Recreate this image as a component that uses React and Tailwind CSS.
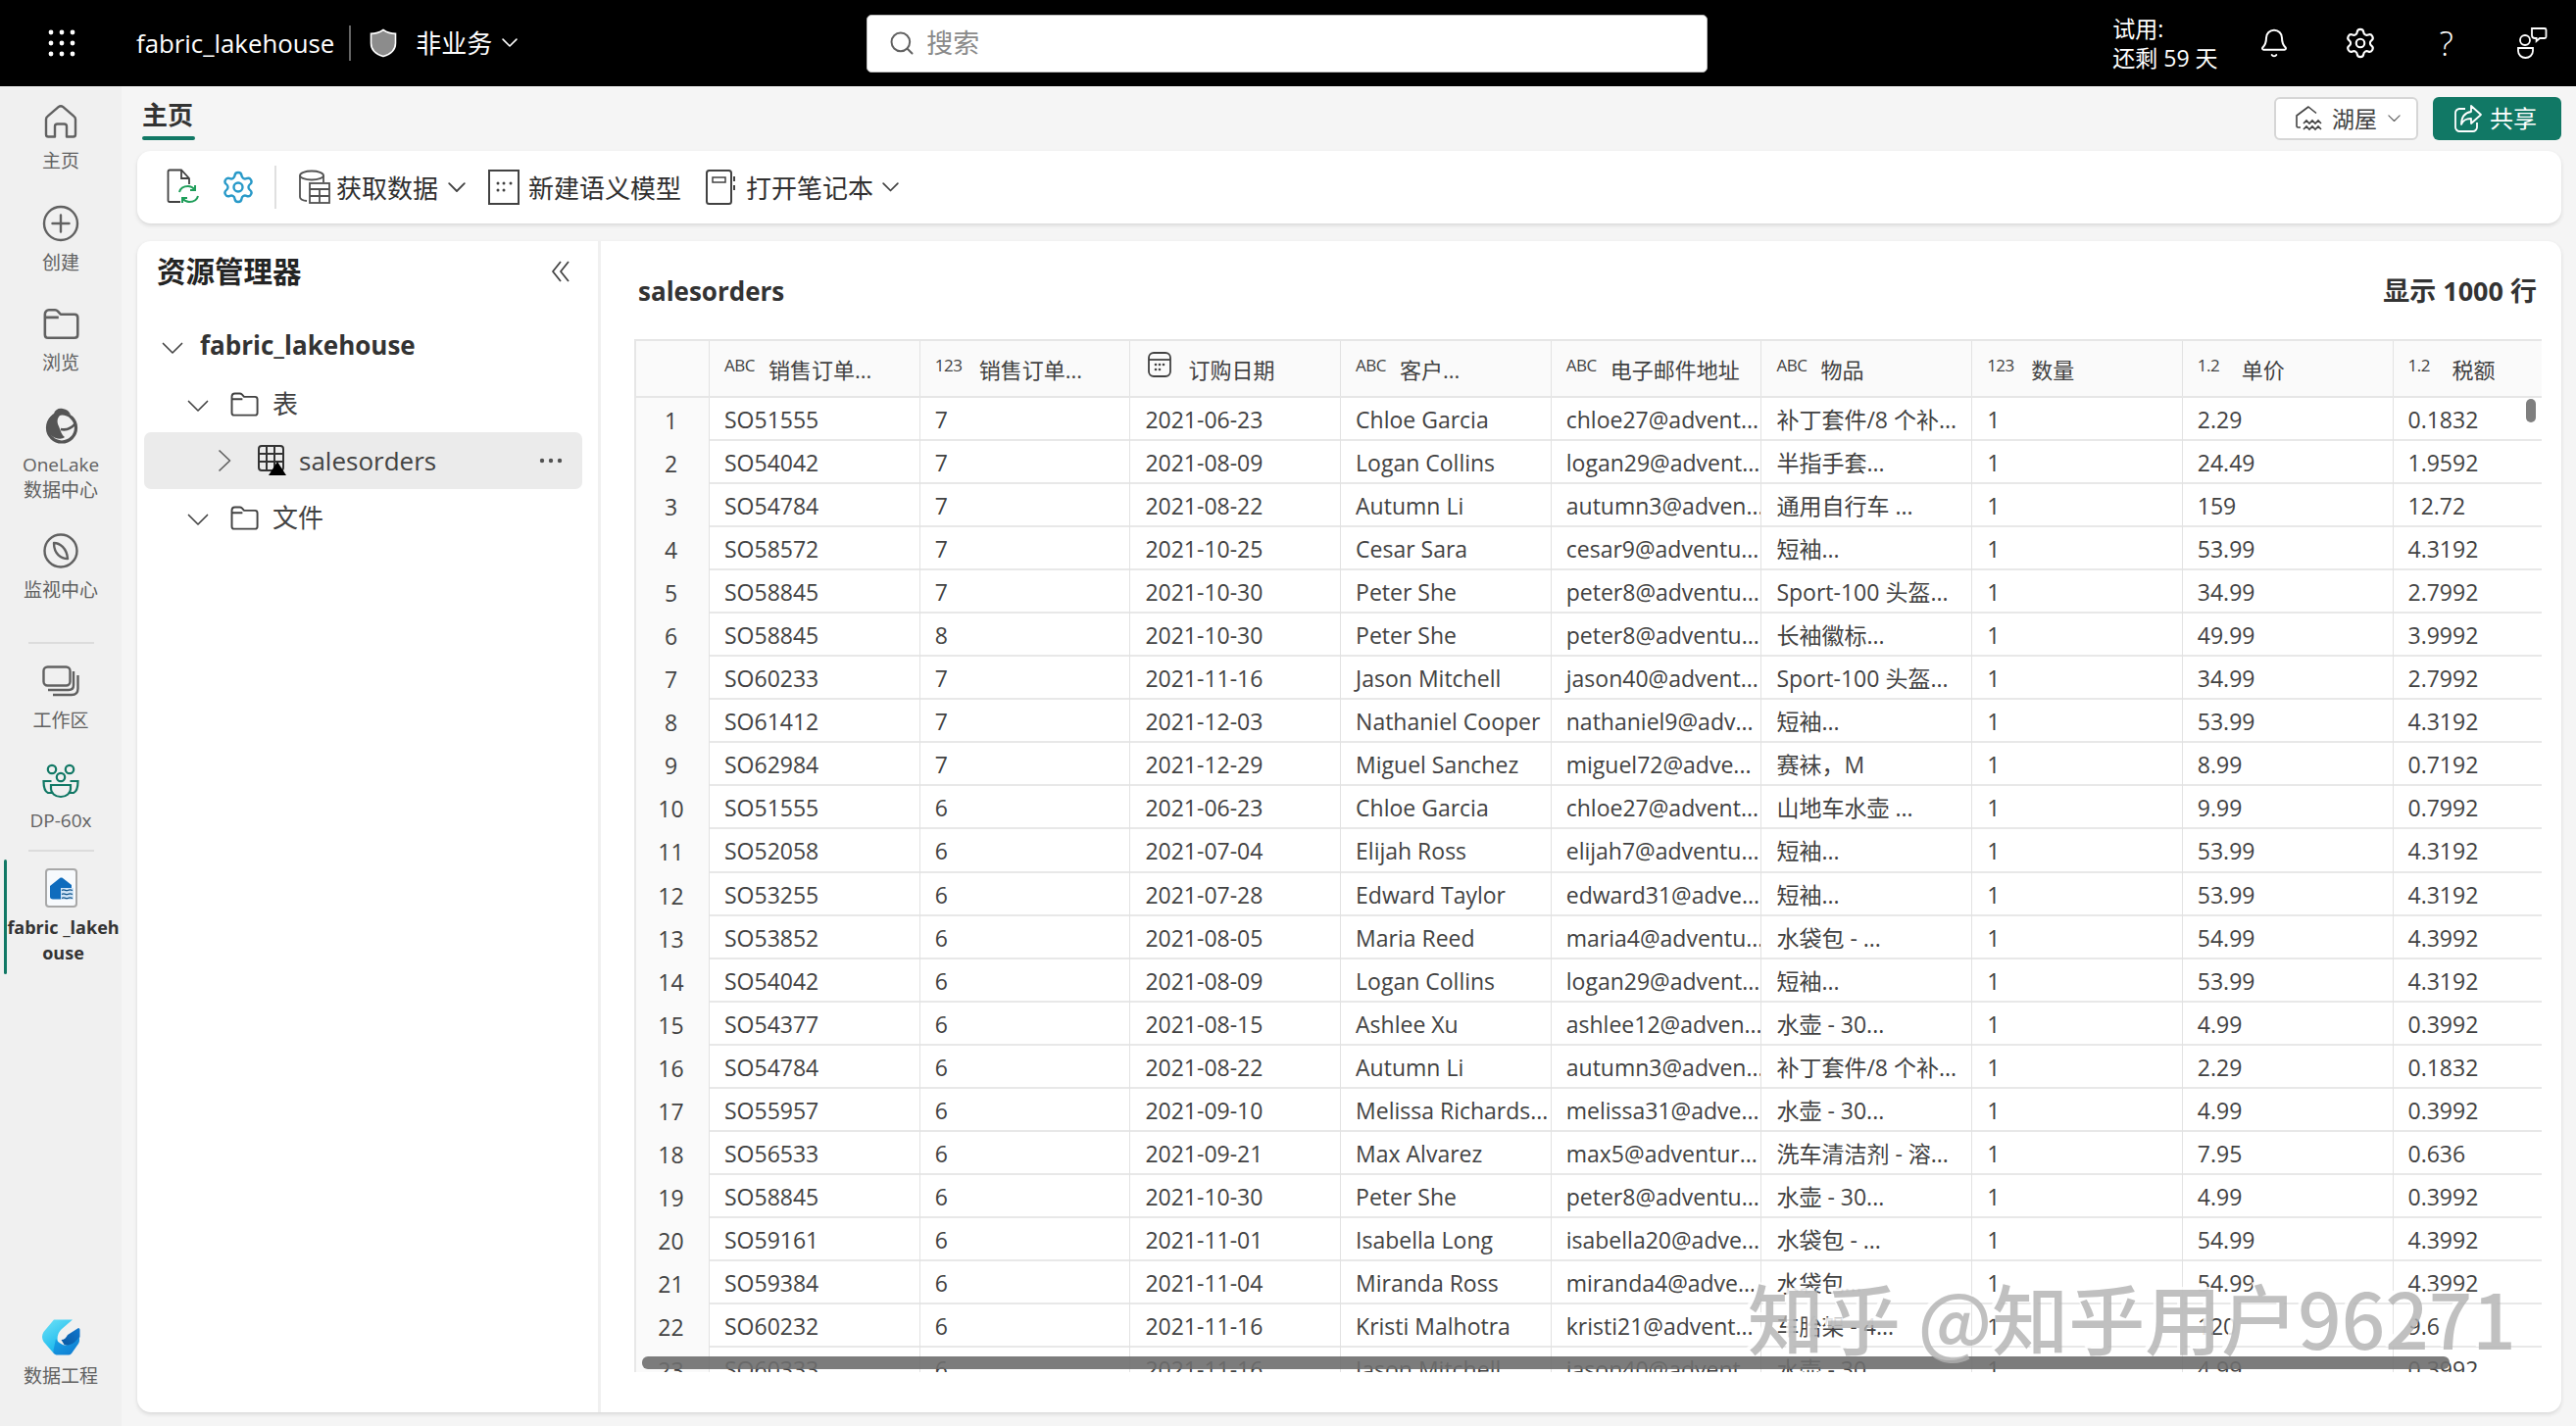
import React from "react";
import { Bell, Settings, Search } from "lucide-react";

const rows = [
["SO51555","7","2021-06-23","Chloe Garcia","chloe27@advent...","补丁套件/8 个补...","1","2.29","0.1832"],
["SO54042","7","2021-08-09","Logan Collins","logan29@advent...","半指手套...","1","24.49","1.9592"],
["SO54784","7","2021-08-22","Autumn Li","autumn3@adven...","通用自行车 ...","1","159","12.72"],
["SO58572","7","2021-10-25","Cesar Sara","cesar9@adventu...","短袖...","1","53.99","4.3192"],
["SO58845","7","2021-10-30","Peter She","peter8@adventu...","Sport-100 头盔...","1","34.99","2.7992"],
["SO58845","8","2021-10-30","Peter She","peter8@adventu...","长袖徽标...","1","49.99","3.9992"],
["SO60233","7","2021-11-16","Jason Mitchell","jason40@advent...","Sport-100 头盔...","1","34.99","2.7992"],
["SO61412","7","2021-12-03","Nathaniel Cooper","nathaniel9@adv...","短袖...","1","53.99","4.3192"],
["SO62984","7","2021-12-29","Miguel Sanchez","miguel72@adve...","赛袜，M","1","8.99","0.7192"],
["SO51555","6","2021-06-23","Chloe Garcia","chloe27@advent...","山地车水壶 ...","1","9.99","0.7992"],
["SO52058","6","2021-07-04","Elijah Ross","elijah7@adventu...","短袖...","1","53.99","4.3192"],
["SO53255","6","2021-07-28","Edward Taylor","edward31@adve...","短袖...","1","53.99","4.3192"],
["SO53852","6","2021-08-05","Maria Reed","maria4@adventu...","水袋包 - ...","1","54.99","4.3992"],
["SO54042","6","2021-08-09","Logan Collins","logan29@advent...","短袖...","1","53.99","4.3192"],
["SO54377","6","2021-08-15","Ashlee Xu","ashlee12@adven...","水壶 - 30...","1","4.99","0.3992"],
["SO54784","6","2021-08-22","Autumn Li","autumn3@adven...","补丁套件/8 个补...","1","2.29","0.1832"],
["SO55957","6","2021-09-10","Melissa Richards...","melissa31@adve...","水壶 - 30...","1","4.99","0.3992"],
["SO56533","6","2021-09-21","Max Alvarez","max5@adventur...","洗车清洁剂 - 溶...","1","7.95","0.636"],
["SO58845","6","2021-10-30","Peter She","peter8@adventu...","水壶 - 30...","1","4.99","0.3992"],
["SO59161","6","2021-11-01","Isabella Long","isabella20@adve...","水袋包 - ...","1","54.99","4.3992"],
["SO59384","6","2021-11-04","Miranda Ross","miranda4@adve...","水袋包...","1","54.99","4.3992"],
["SO60232","6","2021-11-16","Kristi Malhotra","kristi21@advent...","车胎架 - 4...","1","120","9.6"],
["SO60333","6","2021-11-16","Jason Mitchell","jason40@advent...","水壶 - 30...","1","4.99","0.3992"],
];

const cols = [
  ["ABC","销售订单..."],["123","销售订单..."],["DATE","订购日期"],["ABC","客户..."],["ABC","电子邮件地址"],["ABC","物品"],["123","数量"],["1.2","单价"],["1.2","税额"],
];

const gridCols = "grid grid-cols-[75px_repeat(8,214.7px)_153px]";

function Chevron({ className = "", w = 15, color = "currentColor", sw = 1.6 }) {
  return (
    <svg width={w} height={w * 0.6} viewBox="0 0 15 9" fill="none" className={className}>
      <path d="M1 1l6.5 6.5L14 1" stroke={color} strokeWidth={sw} strokeLinecap="round" strokeLinejoin="round" />
    </svg>
  );
}

function FolderIcon({ w = 30, h = 26, sw = 2, color = "#424242" }) {
  return (
    <svg width={w} height={h} viewBox="0 0 30 26" fill="none">
      <path d="M1.5 5c0-2 1.3-3.5 3.3-3.5h5c1 0 1.8.4 2.4 1l2.3 2.6H26c1.5 0 2.6 1.1 2.6 2.6V22c0 1.5-1.1 2.6-2.6 2.6H4C2.6 24.6 1.5 23.5 1.5 22V5zM1.5 7.6h11.3" stroke={color} strokeWidth={sw} strokeLinejoin="round" />
    </svg>
  );
}

function RailItem({ icon, lines, className = "", labelClass = "text-[#616161]" }) {
  return (
    <div className={`flex flex-col items-center w-full ${className}`}>
      <div className="h-[40px] flex items-center justify-center">{icon}</div>
      <div className="mt-[7px] flex flex-col items-center">
        {lines.map((l) => (
          <div key={l} className={`text-[19px] leading-[26px] whitespace-nowrap ${labelClass}`}>{l}</div>
        ))}
      </div>
    </div>
  );
}

function TopBar() {
  const dots = [];
  for (let y = 0; y < 3; y++) for (let x = 0; x < 3; x++) dots.push(<circle key={x + "-" + y} cx={3 + x * 11} cy={3 + y * 11} r="2.4" fill="#fff" />);
  return (
    <div className="h-[88px] bg-black flex items-center text-white shrink-0 relative">
      <svg width="28" height="28" viewBox="0 0 28 28" className="ml-[49px]">{dots}</svg>
      <div className="ml-[62px] text-[25.8px] leading-[36px] whitespace-nowrap">fabric_lakehouse</div>
      <div className="ml-[15px] w-[2px] h-[36px] bg-[#666]" />
      <svg width="28" height="30" viewBox="0 0 28 30" className="ml-[19px]">
        <path d="M14 1.5C10.5 4 6 5.4 1.5 5.4V15c0 7 5.2 11.4 12.5 13.6C21.3 26.4 26.5 22 26.5 15V5.4C22 5.4 17.5 4 14 1.5z" fill="#8c8c8c" stroke="#fff" strokeWidth="1.6" />
      </svg>
      <div className="ml-[19px] text-[26px] leading-[36px] whitespace-nowrap">非业务</div>
      <Chevron className="ml-[10px]" w={16} color="#fff" sw={1.5} />
      <div className="ml-[356px] w-[858px] h-[59px] bg-white rounded-[5px] border border-[#bdbdbd] flex items-center pl-[21px]">
        <Search size={28} strokeWidth={1.7} className="text-[#616161]" />
        <span className="ml-[11px] text-[27px] text-[#8a8a8a]">搜索</span>
      </div>
      <div className="ml-[413px] flex flex-col text-[23px] leading-[30px] whitespace-nowrap">
        <span>试用:</span>
        <span>还剩 59 天</span>
      </div>
      <Bell size={32} strokeWidth={1.5} className="ml-[41px]" />
      <Settings size={34} strokeWidth={1.5} className="ml-[55px]" />
      <div className="ml-[61px] w-[20px] text-[34px] leading-[40px] font-light text-center">?</div>
      <svg width="32" height="36" viewBox="0 0 32 36" fill="none" stroke="#fff" strokeWidth="1.8" className="ml-[61px] shrink-0">
        <circle cx="9" cy="15" r="5" />
        <path d="M2 23h15v3c0 4-3.4 7-7.5 7S2 30 2 26v-3z" />
        <path d="M16 3h13c1 0 1.5.6 1.5 1.5v7c0 1-.6 1.5-1.5 1.5h-5l-3.4 3v-3H19c-1.5 0-3-1-3-3V3z" />
      </svg>
    </div>
  );
}

function Rail() {
  const grey = "#616161";
  return (
    <div className="w-[124px] shrink-0 bg-[#f0f0f0] flex flex-col items-center pt-[16px] pb-[38px]">
      <RailItem
        lines={["主页"]}
        icon={
          <svg width="36" height="36" viewBox="0 0 36 36" fill="none" stroke={grey} strokeWidth="2.4" strokeLinejoin="round">
            <path d="M15.6 3.2c1.4-1.2 3.4-1.2 4.8 0l11 9.4c1 .8 1.6 2 1.6 3.2v15.4c0 1.3-1 2.3-2.3 2.3H24V23c0-1.5-1-2.5-2.5-2.5h-7C13 20.5 12 21.5 12 23v10.5H5.3C4 33.5 3 32.5 3 31.2V15.8c0-1.2.6-2.4 1.6-3.2z" />
          </svg>
        }
      />
      <RailItem
        className="mt-[31px]"
        lines={["创建"]}
        icon={
          <svg width="38" height="38" viewBox="0 0 38 38" fill="none" stroke={grey} strokeWidth="2.4" strokeLinecap="round">
            <circle cx="19" cy="19" r="17" />
            <path d="M19 10.5v17M10.5 19h17" />
          </svg>
        }
      />
      <RailItem className="mt-[29px]" lines={["浏览"]} icon={<FolderIcon w={37} h={33} sw={2.1} color={grey} />} />
      <RailItem
        className="mt-[31px]"
        lines={["OneLake", "数据中心"]}
        icon={
          <svg width="38" height="38" viewBox="0 0 38 38" fill="none">
            <circle cx="20" cy="21.5" r="14.5" stroke="#555" strokeWidth="3.2" />
            <path d="M5 20C5 13 9 9 12 7c1-4 5-6 9-5 4 .6 7 3 8 6-4-1-8-1-11 1-3 3-3 7-1 11 2 5 3 9 6 11-2 2-6 2-9 1C9 30 5 26 5 20z" fill="#555" />
            <path d="M19 23c5 1 11-1 15-6" stroke="#555" strokeWidth="2.6" />
          </svg>
        }
      />
      <RailItem
        className="mt-[29px]"
        lines={["监视中心"]}
        icon={
          <svg width="38" height="38" viewBox="0 0 38 38" fill="none" stroke={grey} strokeWidth="2.4">
            <circle cx="19" cy="19" r="16.5" />
            <path d="M12 11c6 0 13 5 14 16-6.5 0-14-4.5-14-16z" strokeLinejoin="round" />
          </svg>
        }
      />
      <div className="mt-[40px] w-[67px] h-[2px] bg-[#dcdcdc]" />
      <RailItem
        className="mt-[18px]"
        lines={["工作区"]}
        icon={
          <svg width="38" height="32" viewBox="0 0 38 32" fill="none" stroke={grey} strokeWidth="2.4">
            <rect x="1.5" y="1.5" width="27" height="19" rx="4" />
            <path d="M6 25h21c3 0 5-2 5-5V6" />
            <path d="M11 30h19c4 0 6.5-2.5 6.5-6.5V10" />
          </svg>
        }
      />
      <RailItem
        className="mt-[29px]"
        lines={["DP-60x"]}
        icon={
          <svg width="38" height="36" viewBox="0 0 38 36" fill="none" stroke="#117865" strokeWidth="2.2">
            <circle cx="10" cy="6" r="4.2" />
            <circle cx="28" cy="6" r="4.2" />
            <circle cx="19" cy="14" r="4.2" />
            <path d="M10 30H6c-2.5-1-4.5-5-4.5-12h8" />
            <path d="M28 30h4c2.5-1 4.5-5 4.5-12h-8" />
            <path d="M9 22h20v4c0 4-4 8-10 8S9 30 9 26z" />
          </svg>
        }
      />
      <div className="mt-[17px] w-[67px] h-[2px] bg-[#dcdcdc]" />
      <div className="relative mt-[17px] w-full flex flex-col items-center">
        <div className="absolute left-[4px] top-[-9px] w-[3px] h-[117px] bg-[#117865] rounded-[2px]" />
        <div className="w-[33px] h-[40px] bg-[#f7fafd] border-2 border-[#a8a8a8] rounded-[4px] flex items-center justify-center">
          <svg width="27" height="25" viewBox="0 0 27 25">
            <path d="M2 10l10-8c1-.6 2-.6 3 0l9 7v12c0 1.5-1 2.5-2 2.5H5c-2 0-3-1-3-2.5z" fill="#0f6cbd" />
            <path d="M13 12h13v12H13z" fill="#cfe4f7" />
            <path d="M14 14.5c3-2 4 1 6 0s3-1 5 0M14 18.5c3-2 4 1 6 0s3-1 5 0M14 22.5c3-2 4 1 6 0s3-1 5 0" stroke="#0f548c" strokeWidth="1.3" fill="none" />
          </svg>
        </div>
        <div className="mt-[7px] pl-[5px] text-[18px] leading-[26px] font-bold text-[#333] whitespace-nowrap">fabric _lakeh</div>
        <div className="pl-[5px] text-[18px] leading-[26px] font-bold text-[#333] whitespace-nowrap">ouse</div>
      </div>
      <RailItem
        className="mt-auto"
        lines={["数据工程"]}
        icon={
          <svg width="40" height="38" viewBox="0 0 40 38">
            <defs>
              <linearGradient id="lgA" x1="0" y1="0" x2="0.6" y2="1"><stop offset="0" stopColor="#6fe3f7" /><stop offset="1" stopColor="#12b4ec" /></linearGradient>
              <linearGradient id="lgB" x1="0" y1="0" x2="1" y2="1"><stop offset="0" stopColor="#18a6e8" /><stop offset="1" stopColor="#0f78cf" /></linearGradient>
              <linearGradient id="lgC" x1="0" y1="1" x2="1" y2="0"><stop offset="0" stopColor="#0a57a0" /><stop offset="1" stopColor="#0f78cf" /></linearGradient>
            </defs>
            <path d="M13 1.5h19L21 11c-4 4-5 8-4 13L12 35 2.5 24c-2-3-2-7 0-10z" fill="url(#lgA)" />
            <path d="M27 17l11-7c1 0 1.5 1 1.5 2v7c-3 7-10 11-16 8l-3-5c3 0 5-2 6.500-5z" fill="url(#lgC)" />
            <path d="M15 21c3 5 9 8 14 6 4-1 7-4 10-8v4c0 1-.5 2-1 3l-7 10c-1 1-2 1.500-3 1.500H17c-2 0-3.500-.5-5-2.500z" fill="url(#lgB)" />
          </svg>
        }
      />
    </div>
  );
}

function Toolbar() {
  return (
    <div className="h-[74px] bg-white rounded-[14px] shadow-[0_2px_4px_rgba(0,0,0,0.12)] flex items-center text-[26px] text-[#303030] whitespace-nowrap shrink-0">
      <svg width="34" height="38" viewBox="0 0 34 38" fill="none" className="ml-[30px]">
        <path d="M14 34H3c-1 0-1.500-.5-1.500-1.500V3C1.500 2 2 1.500 3 1.500h12L23 10v6" stroke="#424242" strokeWidth="1.8" />
        <path d="M15 1.500V10h8" stroke="#424242" strokeWidth="1.8" />
        <path d="M13 24c1-4 5-6 9-6 3 0 5 1.500 7 3.500M29 17v5h-5M32 28c-1 4-5 6-9 6-3 0-5-1.500-7-3.500M16 35v-5h5" stroke="#1f9e5a" strokeWidth="2" fill="none" />
      </svg>
      <Settings size={36} strokeWidth={1.6} className="ml-[21px] text-[#2899c8]" />
      <div className="ml-[19px] w-[2px] h-[44px] bg-[#e0e0e0]" />
      <svg width="34" height="36" viewBox="0 0 34 36" fill="none" stroke="#525252" strokeWidth="1.8" className="ml-[22px]">
        <ellipse cx="14" cy="6" rx="12" ry="4.5" />
        <path d="M2 6v22c0 2 2.5 3.5 7 4M26 6v7" />
        <rect x="12" y="14" width="20" height="20" />
        <path d="M12 20h20M22 20v14M12 27h20" />
      </svg>
      <span className="ml-[5px] mt-[2px]">获取数据</span>
      <Chevron className="ml-[10px]" w={18} color="#424242" sw={1.5} />
      <svg width="32" height="36" viewBox="0 0 32 36" fill="none" className="ml-[23px]">
        <rect x="1" y="1" width="30" height="34" stroke="#424242" strokeWidth="2" />
        <g fill="#424242">
          <circle cx="10" cy="14" r="1.5" /><circle cx="16" cy="14" r="1.5" /><circle cx="23" cy="14" r="1.5" />
          <circle cx="10" cy="21" r="1.5" /><circle cx="16" cy="21" r="1.5" />
        </g>
      </svg>
      <span className="ml-[9px] mt-[2px]">新建语义模型</span>
      <svg width="30" height="36" viewBox="0 0 30 36" fill="none" stroke="#424242" strokeWidth="2" className="ml-[25px]">
        <rect x="1" y="1" width="25" height="34" rx="2.5" />
        <rect x="7" y="8" width="13" height="5" strokeWidth="1.5" />
        <path d="M29 7v5M29 16v5" />
      </svg>
      <span className="ml-[11px] mt-[2px]">打开笔记本</span>
      <Chevron className="ml-[9px]" w={17} color="#424242" sw={1.5} />
    </div>
  );
}

function Explorer() {
  return (
    <div className="w-[473px] shrink-0 border-r-[3px] border-[#f0f0f0] flex flex-col">
      <div className="mt-[11px] h-[40px] flex items-center pl-[20px] pr-[28px]">
        <span className="text-[29.5px] font-bold text-[#242424] whitespace-nowrap">资源管理器</span>
        <svg width="20" height="24" viewBox="0 0 20 24" fill="none" stroke="#424242" strokeWidth="1.8" className="ml-auto">
          <path d="M10 2L2 12l8 10M18 2l-8 10 8 10" strokeLinejoin="round" />
        </svg>
      </div>
      <div className="mt-[26px] h-[58px] ml-[7px] w-[447px] flex items-center pl-[18px] text-[#333]">
        <Chevron className="mt-[7px]" w={22} color="#424242" sw={1.1} />
        <span className="ml-[17px] text-[26px] font-bold whitespace-nowrap">fabric_lakehouse</span>
      </div>
      <div className="mt-[2px] h-[58px] ml-[7px] w-[447px] flex items-center pl-[44px] text-[#424242]">
        <Chevron className="mt-[5px]" w={22} color="#424242" sw={1.1} />
        <span className="ml-[22px]"><FolderIcon w={29} h={25} /></span>
        <span className="ml-[14px] text-[26px]">表</span>
      </div>
      <div className="h-[58px] ml-[7px] w-[447px] bg-[#ebebeb] rounded-[7px] flex items-center pl-[75px] pr-[20px] text-[#424242]">
        <svg width="14" height="24" viewBox="0 0 14 24" fill="none"><path d="M1.5 1.5L12.5 12 1.5 22.5" stroke="#616161" strokeWidth="1.7" strokeLinejoin="round" /></svg>
        <svg width="30" height="32" viewBox="0 0 30 32" fill="none" className="ml-[27px]">
          <rect x="1" y="1" width="25" height="25" rx="3" stroke="#333" strokeWidth="2" />
          <path d="M9 1v25M17 1v25M1 9h25M1 17h25" stroke="#333" strokeWidth="2" />
          <path d="M20 17l9 14H11z" fill="#000" />
        </svg>
        <span className="ml-[12px] text-[26px] whitespace-nowrap">salesorders</span>
        <svg width="24" height="6" viewBox="0 0 24 6" className="ml-auto" fill="#525252"><circle cx="3" cy="3" r="2.2" /><circle cx="12" cy="3" r="2.2" /><circle cx="21" cy="3" r="2.2" /></svg>
      </div>
      <div className="h-[58px] ml-[7px] w-[447px] flex items-center pl-[44px] text-[#424242]">
        <Chevron className="mt-[5px]" w={22} color="#424242" sw={1.1} />
        <span className="ml-[22px]"><FolderIcon w={29} h={25} /></span>
        <span className="ml-[14px] text-[26px]">文件</span>
      </div>
    </div>
  );
}

function HeaderCell({ type, label }) {
  return (
    <div className="relative border-r-[1.5px] border-[#e2e2e2] flex items-center overflow-hidden pl-[15px]">
      {type === "DATE" ? (
        <svg width="24" height="26" viewBox="0 0 24 26" fill="none" stroke="#424242" strokeWidth="1.8" className="mb-[8px] ml-[3px] mr-[17px]">
          <rect x="1" y="1" width="22" height="24" rx="5" />
          <path d="M1 8h22" />
          <g fill="#424242" stroke="none"><circle cx="8" cy="13" r="1.3" /><circle cx="12" cy="13" r="1.3" /><circle cx="16" cy="13" r="1.3" /><circle cx="8" cy="18" r="1.3" /><circle cx="12" cy="18" r="1.3" /></g>
        </svg>
      ) : (
        <span className="w-[45px] text-[17px] leading-[22px] text-[#424242] mb-[6px] tracking-[-0.5px]">{type}</span>
      )}
      <span className="text-[22px] leading-[36px] text-[#424242] whitespace-nowrap mt-[2px]">{label}</span>
    </div>
  );
}

function DataTable() {
  return (
    <div className="relative h-[1054px] w-[1946px] overflow-hidden">
      <div className={`${gridCols} h-[60px] bg-[#fafafa] border-t-[2px] border-b-[2px] border-l-[2px] border-[#e6e6e6]`}>
        <div className="border-r-[1.5px] border-[#e2e2e2]" />
        {cols.map((c, i) => (
          <HeaderCell key={i} type={c[0]} label={c[1]} />
        ))}
      </div>
      {rows.map((r, i) => (
        <div key={i} className={`${gridCols} h-[44.05px] border-b-[2px] border-l-[2px] border-[#e8e8e8] text-[23px] leading-[45px] text-[#424242]`}>
          <div className="bg-[#fafafa] border-r-[1.5px] border-[#e2e2e2] text-center pr-[3px] pt-[1px]">{i + 1}</div>
          {r.map((v, j) => (
            <div key={j} className="border-r-[1.5px] border-[#e2e2e2] pl-[15px] whitespace-nowrap overflow-hidden">{v}</div>
          ))}
        </div>
      ))}
      <div className="absolute left-[8px] top-[1038px] w-[1844px] h-[13px] rounded-[6px] bg-[#6e6e6e]/90" />
      <div className="absolute left-[1930px] top-[61px] w-[10px] h-[24px] rounded-[5px] bg-[#7f7f7f]" />
    </div>
  );
}

export default function App() {
  return (
    <div className="relative w-[2628px] h-[1455px] overflow-hidden flex flex-col bg-[#f5f5f5] font-['Open_Sans','Noto_Sans_CJK_SC',sans-serif]">
      <TopBar />
      <div className="flex flex-1 min-h-0">
        <Rail />
        <div className="flex-1 min-w-0 flex flex-col pl-[16px] pr-[15px]">
          <div className="h-[66px] flex items-start shrink-0">
            <div className="ml-[5px] mt-[12px] flex flex-col">
              <span className="text-[26px] leading-[34px] font-bold text-[#333]">主页</span>
              <div className="mt-[5px] w-[54px] h-[4px] bg-[#117865] rounded-[2px]" />
            </div>
            <div className="ml-auto mt-[11px] flex gap-[15px]">
              <div className="w-[147px] h-[44px] bg-white border-2 border-[#d6d6d6] rounded-[6px] flex items-center pl-[19px]">
                <svg width="30" height="30" viewBox="0 0 30 30" fill="none" stroke="#424242" strokeWidth="1.6">
                  <path d="M6 24H3.5c-1 0-1.5-.5-1.5-1.5V12l12-9 8 6.5" strokeLinejoin="round" />
                  <path d="M9 20l3-3 3 3 3-3 3 3 3-3 3 3M9 26l3-3 3 3 3-3 3 3 3-3 3 3" />
                </svg>
                <span className="ml-[8px] text-[23px] text-[#424242]">湖屋</span>
                <Chevron className="ml-[11px]" w={13} color="#616161" sw={1.3} />
              </div>
              <div className="w-[131px] h-[44px] bg-[#117865] rounded-[6px] flex items-center pl-[21px] text-white">
                <svg width="30" height="30" viewBox="0 0 30 30" fill="none" stroke="#fff" strokeWidth="1.8" strokeLinejoin="round">
                  <path d="M12 5H6c-2 0-4 2-4 4v15c0 2 2 4 4 4h14c2 0 4-2 4-4v-5" />
                  <path d="M18 2l10 9-10 9v-5c-5 0-8 1-10 6 0-8 4-12 10-13z" />
                </svg>
                <span className="ml-[7px] text-[24px]">共享</span>
              </div>
            </div>
          </div>
          <Toolbar />
          <div className="mt-[18px] h-[1195px] bg-white rounded-[14px] shadow-[0_2px_4px_rgba(0,0,0,0.12)] flex overflow-hidden">
            <Explorer />
            <div className="flex-1 min-w-0 flex flex-col pl-[34px]">
              <div className="h-[100px] flex items-center pr-[25px] pt-[2px] text-[#333] font-bold text-[26px]">
                <span className="ml-[4px]">salesorders</span>
                <span className="ml-auto text-[27px]">显示 1000 行</span>
              </div>
              <DataTable />
            </div>
          </div>
        </div>
      </div>
      <div className="absolute left-[1783px] top-[1293px] text-[78px] leading-[100px] font-medium text-[#b0b0b0]/80 whitespace-nowrap font-['Noto_Sans_CJK_SC','Open_Sans',sans-serif] [text-shadow:-3px_-3px_0_rgba(255,255,255,0.85)]">
        知乎 @知乎用户96271
      </div>
    </div>
  );
}
